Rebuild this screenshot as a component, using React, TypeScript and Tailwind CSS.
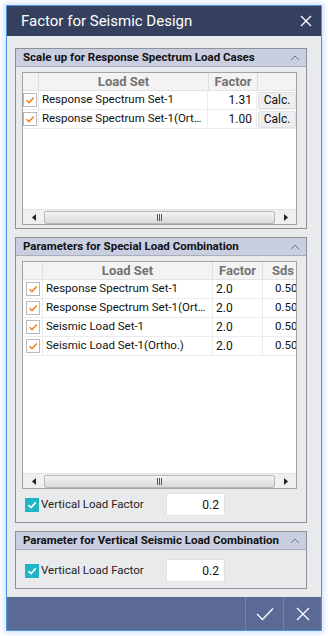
import { ReactNode } from "react";

const font = { fontFamily: 'Roboto, "Noto Sans", sans-serif' };

function Check({ on = true }: { on?: boolean }) {
  return (
    <div className="w-[14px] h-[14px] border border-[#b9b9b9] bg-white flex items-center justify-center">
      {on && (
        <svg width="10" height="10" viewBox="0 0 10 10">
          <path d="M1.5 5.2 L4 7.6 L8.8 2.4" fill="none" stroke="#f5821f" strokeWidth="1.5" />
        </svg>
      )}
    </div>
  );
}

function TealCheck() {
  return (
    <div className="w-[14px] h-[14px] bg-[#1fb5c6] flex items-center justify-center">
      <svg width="10" height="10" viewBox="0 0 10 10">
        <path d="M1.5 5.2 L4 7.6 L8.8 2.4" fill="none" stroke="#ffffff" strokeWidth="1.6" />
      </svg>
    </div>
  );
}

function Caret() {
  return (
    <svg width="10" height="6" viewBox="0 0 10 6">
      <path d="M1 5 L5 1 L9 5" fill="none" stroke="#777" strokeWidth="1" />
    </svg>
  );
}

function Group({ title, children, className }: { title: string; children: ReactNode; className?: string }) {
  return (
    <div className={"border border-[#8e9196] flex flex-col " + (className ?? "")}>
      <div className="h-[18px] bg-[#c9cee0] border-b border-[#a9aebb] flex items-center justify-between pl-[7px] pr-[6px]">
        <span className="text-[11.5px] font-bold text-[#111] leading-none whitespace-nowrap">{title}</span>
        <Caret />
      </div>
      {children}
    </div>
  );
}

function HScroll() {
  return (
    <div className="h-[15px] bg-[#f0f0f0] flex items-center border-t border-[#e4e4e4]">
      <div className="w-[21px] flex justify-center">
        <svg width="4" height="7" viewBox="0 0 4 7"><path d="M4 0 L0 3.5 L4 7 Z" fill="#222" /></svg>
      </div>
      <div className="flex-1 h-[13px] rounded-[2px] border border-[#b8b8b8] bg-gradient-to-b from-[#f4f4f4] to-[#d9d9d9] flex items-center justify-center">
        <div className="flex gap-[1px]">
          <div className="w-[1px] h-[7px] bg-[#555]" />
          <div className="w-[1px] h-[7px] bg-[#555]" />
          <div className="w-[1px] h-[7px] bg-[#555]" />
        </div>
      </div>
      <div className="w-[21px] flex justify-center">
        <svg width="4" height="7" viewBox="0 0 4 7"><path d="M0 0 L4 3.5 L0 7 Z" fill="#222" /></svg>
      </div>
    </div>
  );
}

function VerticalRow() {
  return (
    <div className="flex items-center pl-[9px]">
      <TealCheck />
      <span className="ml-[2px] text-[11.5px] text-[#222]">Vertical Load Factor</span>
      <div className="ml-auto mr-[81px] w-[59px] h-[23px] bg-white border border-[#e2e2e2] flex items-center justify-end pr-[5px] text-[12px] text-[#111]">
        0.2
      </div>
    </div>
  );
}

const set1 = [
  { name: "Response Spectrum Set-1", f: "1.31" },
  { name: "Response Spectrum Set-1(Ortho.)", f: "1.00" },
];

const set2 = [
  "Response Spectrum Set-1",
  "Response Spectrum Set-1(Ortho.)",
  "Seismic Load Set-1",
  "Seismic Load Set-1(Ortho.)",
];

export default function App() {
  return (
    <div className="w-[328px] h-[636px] bg-white pt-[5px] pl-[6px]" style={font}>
      <div className="w-[316px] h-[626px] border border-[#4c97ea] shadow-[0_0_6px_2px_rgba(120,170,240,0.35)] flex flex-col">
        <div className="h-[30px] bg-[#34405e] flex items-center justify-between pl-[14px] pr-[9px]">
          <span className="text-[15px] text-white">Factor for Seismic Design</span>
          <svg width="12" height="12" viewBox="0 0 12 12">
            <path d="M1 1 L11 11 M11 1 L1 11" stroke="#ffffff" strokeWidth="1.3" />
          </svg>
        </div>

        <div className="flex-1 bg-[#e9eaec] pl-[8px] pr-[14px] pt-[12px] flex flex-col">
          <Group title="Scale up for Response Spectrum Load Cases" className="h-[181px]">
            <div className="mt-[5px] ml-[6px] mr-[9px] h-[153px] border border-[#a3a3a3] bg-white flex flex-col">
              <div className="flex h-[18px] bg-[#f3f3f3] border-b border-[#e2e2e2] text-[13px] font-bold text-[#737373]">
                <div className="w-[16px] border-r border-[#dedede]" />
                <div className="w-[170px] border-r border-[#dedede] flex items-center justify-center">Load Set</div>
                <div className="w-[49px] border-r border-[#dedede] flex items-center justify-center">Factor</div>
                <div className="flex-1" />
              </div>
              {set1.map((r) => (
                <div key={r.name} className="flex h-[19px] border-b border-[#ececec] text-[11.5px] text-[#111]">
                  <div className="w-[16px] border-r border-[#ececec] flex items-center justify-center"><Check /></div>
                  <div className="w-[170px] border-r border-[#ececec] flex items-center pl-[3px] pr-[4px] min-w-0">
                    <span className="truncate">{r.name}</span>
                  </div>
                  <div className="w-[49px] border-r border-[#ececec] flex items-center justify-end pr-[4px] text-[12px]">{r.f}</div>
                  <div className="flex-1 flex items-center pl-[1px]">
                    <div className="w-[38px] h-[17px] bg-[#eceef1] border border-[#e0e0e0] rounded-[2px] flex items-center justify-center text-[12px]">Calc.</div>
                  </div>
                </div>
              ))}
              <div className="flex-1" />
              <HScroll />
            </div>
          </Group>

          <Group title="Parameters for Special Load Combination" className="mt-[8px] h-[286px]">
            <div className="mt-[5px] ml-[6px] mr-[9px] h-[228px] border border-[#a3a3a3] bg-white flex flex-col overflow-hidden">
              <div className="flex h-[18px] bg-[#f3f3f3] border-b border-[#e2e2e2] text-[13px] font-bold text-[#737373]">
                <div className="w-[20px] shrink-0 border-r border-[#dedede]" />
                <div className="w-[170px] shrink-0 border-r border-[#dedede] flex items-center justify-center">Load Set</div>
                <div className="w-[50px] shrink-0 border-r border-[#dedede] flex items-center justify-center">Factor</div>
                <div className="flex-1 min-w-0 flex items-center pl-[9px]">Sds</div>
              </div>
              {set2.map((n) => (
                <div key={n} className="flex h-[19px] border-b border-[#ececec] text-[11.5px] text-[#111] whitespace-nowrap">
                  <div className="w-[20px] shrink-0 border-r border-[#ececec] flex items-center justify-center"><Check /></div>
                  <div className="w-[170px] shrink-0 border-r border-[#ececec] flex items-center pl-[3px] pr-[4px] min-w-0">
                    <span className="truncate">{n}</span>
                  </div>
                  <div className="w-[50px] shrink-0 border-r border-[#ececec] flex items-center pl-[3px] text-[12px]">2.0</div>
                  <div className="flex-1 min-w-0 flex items-center pl-[12px] overflow-hidden text-[11.5px]">0.50</div>
                </div>
              ))}
              <div className="flex-1" />
              <HScroll />
            </div>
            <div className="mt-[4px]">
              <VerticalRow />
            </div>
          </Group>

          <Group title="Parameter for Vertical Seismic Load Combination" className="mt-[8px] h-[58px]">
            <div className="mt-[9px]">
              <VerticalRow />
            </div>
          </Group>
          <div className="flex-1" />
        </div>

        <div className="h-[33px] bg-[#5b6a95] flex justify-end">
          <div className="w-[38px] border-l border-[#7482a8] flex items-center justify-center">
            <svg width="18" height="14" viewBox="0 0 18 14">
              <path d="M1 7 L6.5 12.5 L17 1.5" fill="none" stroke="#ffffff" strokeWidth="1.3" />
            </svg>
          </div>
          <div className="w-[38px] border-l border-[#7482a8] flex items-center justify-center">
            <svg width="14" height="14" viewBox="0 0 14 14">
              <path d="M1 1 L13 13 M13 1 L1 13" stroke="#ffffff" strokeWidth="1.3" />
            </svg>
          </div>
        </div>
      </div>
    </div>
  );
}
